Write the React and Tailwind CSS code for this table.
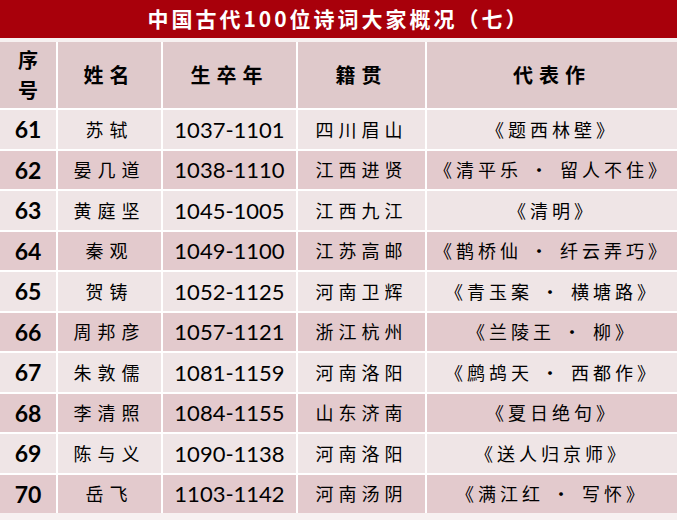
import React from "react";

const rows = [
  ["61", "苏轼", "1037-1101", "四川眉山", "《题西林壁》"],
  ["62", "晏几道", "1038-1110", "江西进贤", "《清平乐 · 留人不住》"],
  ["63", "黄庭坚", "1045-1005", "江西九江", "《清明》"],
  ["64", "秦观", "1049-1100", "江苏高邮", "《鹊桥仙 · 纤云弄巧》"],
  ["65", "贺铸", "1052-1125", "河南卫辉", "《青玉案 · 横塘路》"],
  ["66", "周邦彦", "1057-1121", "浙江杭州", "《兰陵王 · 柳》"],
  ["67", "朱敦儒", "1081-1159", "河南洛阳", "《鹧鸪天 · 西都作》"],
  ["68", "李清照", "1084-1155", "山东济南", "《夏日绝句》"],
  ["69", "陈与义", "1090-1138", "河南洛阳", "《送人归京师》"],
  ["70", "岳飞", "1103-1142", "河南汤阴", "《满江红 · 写怀》"],
];

const cjk = "font-['Noto_Sans_CJK_SC',sans-serif]";
const num = "font-['Lato','Open_Sans',sans-serif]";

const App = () => {
  return (
    <div className="w-[677px] h-[520px] bg-[#f7f1f1] overflow-hidden">
      <div
        className={`${cjk} h-[38px] bg-[#a8000b] text-white flex items-center justify-center text-[21px] font-bold tracking-[3px]`}
      >
        中国古代100位诗词大家概况（七）
      </div>
      <div className="mt-[4px] grid grid-cols-[56px_103px_133px_127px_1fr] gap-[2px] bg-white">
        <div className={`${cjk} h-[66px] bg-[#dfc9cb] flex flex-col items-center justify-center text-[20px] font-bold text-black`}>
          <span className="leading-[30px]">序</span>
          <span className="leading-[30px]">号</span>
        </div>
        {["姓名", "生卒年", "籍贯", "代表作"].map((h) => (
          <div
            key={h}
            className={`${cjk} h-[66px] bg-[#dfc9cb] flex items-center justify-center text-[20px] font-bold tracking-[6px] text-black`}
          >
            {h}
          </div>
        ))}
        {rows.map((r, i) => {
          const bg = i % 2 === 0 ? "bg-[#efe5e6]" : "bg-[#e3cacd]";
          return (
            <React.Fragment key={r[0]}>
              <div className={`${bg} ${num} h-[38.5px] flex items-center justify-center text-[23px] font-bold text-black`}>
                {r[0]}
              </div>
              <div className={`${bg} ${cjk} h-[38.5px] flex items-center justify-center text-[18px] tracking-[6px] text-black`}>
                {r[1]}
              </div>
              <div className={`${bg} ${num} h-[38.5px] flex items-center justify-center text-[22px] text-black`}>
                {r[2]}
              </div>
              <div className={`${bg} ${cjk} h-[38.5px] flex items-center justify-center text-[18px] tracking-[5px] text-black`}>
                {r[3]}
              </div>
              <div className={`${bg} ${cjk} h-[38.5px] flex items-center justify-center text-[18px] tracking-[4px] text-black`}>
                {r[4]}
              </div>
            </React.Fragment>
          );
        })}
      </div>
    </div>
  );
};

export default App;
